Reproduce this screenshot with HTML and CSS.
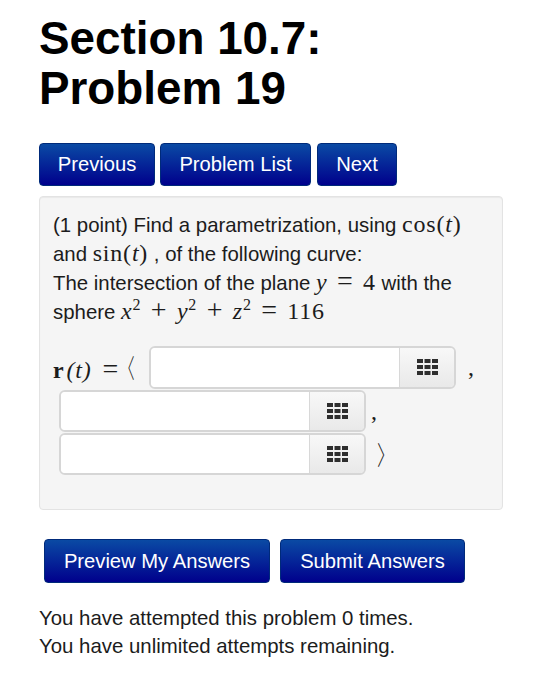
FILE: index.html
```html
<!DOCTYPE html>
<html lang="en">
<head>
<meta charset="utf-8">
<title>Section 10.7: Problem 19</title>
<link rel="stylesheet" href="styles.css">
</head>
<body>
<h1 class="title">Section 10.7:<br>Problem 19</h1>
<nav class="nav">
  <a class="btn btn-prev">Previous</a>
  <a class="btn btn-list">Problem List</a>
  <a class="btn btn-next">Next</a>
</nav>
<section class="well">
  <p class="problem">(1 point) Find a parametrization, using <span class="m">cos(<i>t</i>)</span><br>
  and <span class="m">sin(<i>t</i>)</span> , of the following curve:<br>
  The intersection of the plane <span class="m"><i>y</i><span class="op">=</span>4</span> with the<br>
  sphere <span class="m"><i>x</i><sup>2</sup><span class="op">+</span><i>y</i><sup>2</sup><span class="op">+</span><i>z</i><sup>2</sup><span class="op">=</span>116</span></p>
  <div class="answers">
    <div class="row row-first">
      <span class="m lead"><b>r</b><i class="t">(t)</i><span class="op op-lead">=</span><span class="angle angle-open">〈</span></span>
      <div class="field">
        <input class="input" type="text" aria-label="x">
        <span class="addon"><svg class="grid" viewBox="0 0 21 16"><path d="M0 0h6v4H0zM7.500 0h6v4h-6zM15 0h6v4h-6zM0 6h6v4H0zM7.500 6h6v4h-6zM15 6h6v4h-6zM0 12h6v4H0zM7.500 12h6v4h-6zM15 12h6v4h-6z"/></svg></span>
      </div>
      <span class="m sep sep-first">,</span>
    </div>
    <div class="row">
      <div class="field">
        <input class="input" type="text" aria-label="y">
        <span class="addon"><svg class="grid" viewBox="0 0 21 16"><path d="M0 0h6v4H0zM7.500 0h6v4h-6zM15 0h6v4h-6zM0 6h6v4H0zM7.500 6h6v4h-6zM15 6h6v4h-6zM0 12h6v4H0zM7.500 12h6v4h-6zM15 12h6v4h-6z"/></svg></span>
      </div>
      <span class="m sep">,</span>
    </div>
    <div class="row">
      <div class="field">
        <input class="input" type="text" aria-label="z">
        <span class="addon"><svg class="grid" viewBox="0 0 21 16"><path d="M0 0h6v4H0zM7.500 0h6v4h-6zM15 0h6v4h-6zM0 6h6v4H0zM7.500 6h6v4h-6zM15 6h6v4h-6zM0 12h6v4H0zM7.500 12h6v4h-6zM15 12h6v4h-6z"/></svg></span>
      </div>
      <span class="m sep angle angle-close">〉</span>
    </div>
  </div>
</section>
<div class="actions">
  <a class="btn btn-preview">Preview My Answers</a>
  <a class="btn btn-submit">Submit Answers</a>
</div>
<p class="attempts">You have attempted this problem 0 times.<br>You have unlimited attempts remaining.</p>
</body>
</html>
```
FILE: styles.css
```css
* { box-sizing: border-box; }
html, body { margin: 0; }
body {
  padding: 14px 33px 0 39px;
  font-family: "Liberation Sans", Arial, sans-serif;
  font-size: 20.4px;
  color: #1c1c1c;
  background: #fff;
  width: 536px;
  height: 700px;
  overflow: hidden;
}
.title {
  margin: 0;
  font-size: 45.8px;
  line-height: 50px;
  font-weight: 700;
  color: #000;
}
.nav {
  display: flex;
  margin-top: 29px;
}
.btn {
  display: block;
  height: 43px;
  line-height: 41px;
  text-align: center;
  color: #fff;
  font-size: 20.2px;
  border-radius: 4px;
  border: 1px solid #002a7a;
  background: linear-gradient(#0a4aa4, #00008c);
}
.btn-prev { width: 116px; }
.btn-list { width: 151px; margin-left: 5px; }
.btn-next { width: 80px; margin-left: 6px; }
.well {
  margin-top: 10px;
  height: 314px;
  width: 464px;
  padding: 14px 13px 0;
  background: #f5f5f5;
  border: 1px solid #e3e3e3;
  border-radius: 4px;
  box-shadow: inset 0 1px 1px rgba(0,0,0,.05);
}
.problem {
  margin: 0;
  line-height: 28.9px;
  white-space: nowrap;
}
.m {
  font-family: "Liberation Serif", "Times New Roman", serif;
  font-size: 24px;
  line-height: 0;
  letter-spacing: .8px;
  color: #1c1c1c;
}
.m sup { font-size: 16px; line-height: 0; }
.op { margin: 0 9.500px; font-size: 28px; }
.op-lead { margin: 0 0 0 11px; }
.answers {
  margin-top: 19px;
  display: flex;
  flex-direction: column;
  gap: 1px;
}
.row {
  display: flex;
  align-items: center;
  height: 42px;
  padding-left: 6px;
}
.row-first {
  height: 43px;
  padding-left: 0;
}
.lead { width: 96px; flex: none; white-space: nowrap; }
.t { margin-left: 2px; }
.angle {
  display: inline-block;
  font-family: "Noto Sans CJK JP", sans-serif;
  font-weight: 300;
  font-size: 26px;
  line-height: 1;
  transform: scaleX(.7);
}
.angle-open { transform: scaleX(.6); transform-origin: left center; }
.field {
  display: flex;
  width: 307px;
  height: 100%;
  flex: none;
  border: 2px solid #d6d6d6;
  border-radius: 6px;
  overflow: hidden;
}
.input {
  flex: 1;
  min-width: 0;
  border: 0;
  padding: 0;
  background: #fff;
}
.addon {
  flex: none;
  width: 55px;
  display: flex;
  align-items: center;
  justify-content: center;
  border-left: 1px solid #d8d8d8;
  background: linear-gradient(#f8f8f8, #e9e9e9);
}
.grid { width: 21px; height: 16px; fill: #2e2e2e; }
.sep { margin-left: 5px; }
.sep-first { margin-left: 12px; }
.angle-close { margin-left: 11px; transform-origin: left center; }
.actions {
  display: flex;
  gap: 10px;
  margin-top: 29px;
  padding-left: 5px;
}
.actions .btn { height: 44px; line-height: 42px; }
.btn-preview { width: 226px; }
.btn-submit { width: 185px; }
.attempts {
  margin: 21px 0 0;
  line-height: 28px;
}
```
